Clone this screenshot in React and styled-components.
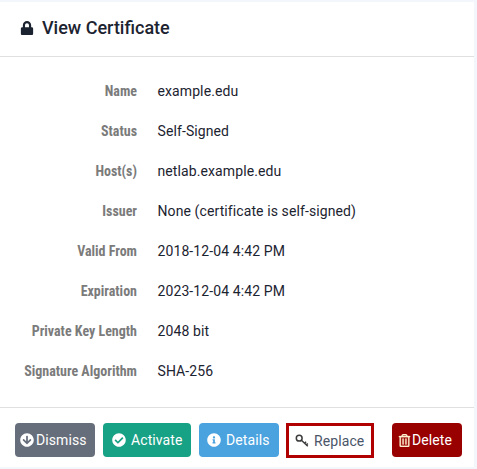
import React from 'react'
import styled, { createGlobalStyle } from 'styled-components'
import { FaLock, FaArrowCircleDown, FaCheckCircle, FaInfoCircle, FaRegTrashAlt } from 'react-icons/fa'

const GlobalStyle = createGlobalStyle`
  html, body {
    margin: 0;
    padding: 0;
    background: #f3f7fb;
    font-family: Roboto, "Liberation Sans", sans-serif;
  }
`

const Card = styled.div`
  width: 474px;
  height: 465px;
  margin-top: 2px;
  background: #fff;
  display: flex;
  flex-direction: column;
  box-sizing: border-box;
`

const Header = styled.div`
  height: 55px;
  flex: none;
  display: flex;
  align-items: center;
  gap: 8px;
  padding: 0 0 3px 20px;
  box-sizing: border-box;
  border-bottom: 1px solid #e0e0e0;
  color: #1c2330;
  font-size: 18px;
  font-weight: 500;
`

const Body = styled.div`
  flex: 1;
  display: flex;
  flex-direction: column;
  padding-top: 14px;
`

const Row = styled.div`
  height: 40px;
  display: flex;
  align-items: center;
  gap: 20.5px;
  font-size: 14px;
`

const Label = styled.div`
  width: 137px;
  text-align: right;
  white-space: nowrap;
  color: #7b7b7b;
  font-weight: 700;
  font-stretch: condensed;
`

const Value = styled.div`
  color: #1c2330;
  letter-spacing: 0.1px;
`

const Footer = styled.div`
  height: 60px;
  flex: none;
  display: flex;
  align-items: flex-start;
  padding: 15px 0 0 15px;
  box-sizing: border-box;
  border-top: 1px solid #e0e0e0;
`

const Button = styled.button`
  height: 34px;
  width: ${p => p.$width}px;
  margin-left: ${p => p.$gap || 0}px;
  padding: 0 0 0 ${p => p.$pad}px;
  border: none;
  border-radius: 4px;
  background: ${p => p.$bg};
  color: #fff;
  font-family: inherit;
  font-size: 14px;
  letter-spacing: 0.1px;
  display: flex;
  align-items: center;
  gap: ${p => p.$iconGap}px;
`

const OutlineButton = styled(Button)`
  background: #fff;
  color: #4a5568;
  border: 3px solid #b00000;
  border-radius: 0;
  box-sizing: border-box;
  height: 35px;
`

const DeleteIcon = styled(FaRegTrashAlt)`
  color: #fff3d0;
  stroke: #fff3d0;
  stroke-width: 12;
`

const details = [
  ['Name', 'example.edu'],
  ['Status', 'Self-Signed'],
  ['Host(s)', 'netlab.example.edu'],
  ['Issuer', 'None (certificate is self-signed)'],
  ['Valid From', '2018-12-04 4:42 PM'],
  ['Expiration', '2023-12-04 4:42 PM'],
  ['Private Key Length', '2048 bit'],
  ['Signature Algorithm', 'SHA-256'],
]

function KeyIcon() {
  return (
    <svg width="14" height="14" viewBox="0 0 14 14" fill="none" stroke="#3c3c3c" strokeWidth="1.5">
      <circle cx="4.2" cy="4.2" r="2.9" />
      <path d="M6.4 6.3L12.8 12.2M9.5 9.2L11.1 7.7M11.4 10.9L12.8 9.5" />
    </svg>
  )
}

export default function App() {
  return (
    <>
      <GlobalStyle />
      <Card>
        <Header>
          <FaLock size={14} />
          View Certificate
        </Header>
        <Body>
          {details.map(([label, value]) => (
            <Row key={label}>
              <Label>{label}</Label>
              <Value>{value}</Value>
            </Row>
          ))}
        </Body>
        <Footer>
          <Button $width={80} $pad={5} $bg="#676e7b" $iconGap={2}><FaArrowCircleDown size={14} />Dismiss</Button>
          <Button $width={88} $gap={8} $pad={9} $bg="#17a185" $iconGap={5}><FaCheckCircle size={14} />Activate</Button>
          <Button $width={80} $gap={8} $pad={8} $bg="#4aa3df" $iconGap={5}><FaInfoCircle size={14} />Details</Button>
          <OutlineButton $width={88} $gap={7} $pad={6} $iconGap={5}><KeyIcon />Replace</OutlineButton>
          <Button $width={70} $gap={18} $pad={6} $bg="#990000" $iconGap={1}><DeleteIcon size={13} />Delete</Button>
        </Footer>
      </Card>
    </>
  )
}
